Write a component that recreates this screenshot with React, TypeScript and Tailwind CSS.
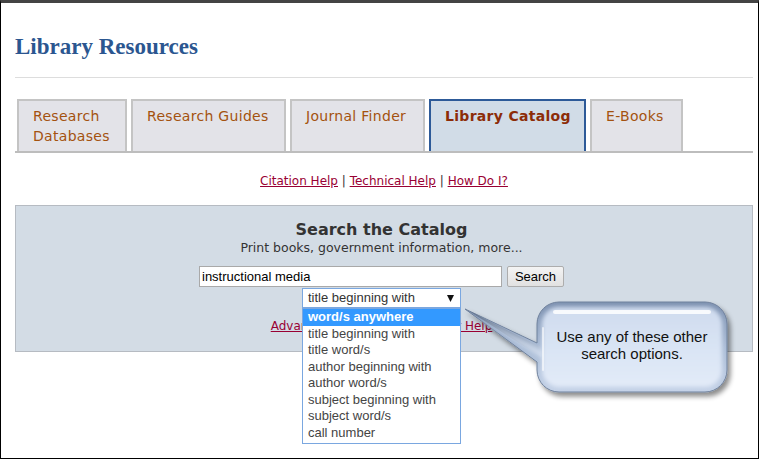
import React from 'react';

const sans = "font-['DejaVu_Sans',Verdana,sans-serif]";
const arial = "font-['Liberation_Sans',Arial,sans-serif]";

const options = [
  'word/s anywhere',
  'title beginning with',
  'title word/s',
  'author beginning with',
  'author word/s',
  'subject beginning with',
  'subject word/s',
  'call number',
];

function Callout() {
  return (
    <div className="absolute left-[454px] top-[292px] w-[290px] h-[110px]">
      <svg width="290" height="110" viewBox="0 0 290 110" className="absolute inset-0">
        <defs>
          <linearGradient id="rimFill" x1="0" y1="0" x2="0" y2="1">
            <stop offset="0" stopColor="#7d91b0" />
            <stop offset="0.5" stopColor="#a9bbd5" />
            <stop offset="1" stopColor="#c4d2e7" />
          </linearGradient>
          <linearGradient id="faceFill" x1="0" y1="0" x2="0" y2="1">
            <stop offset="0" stopColor="#cfdbee" />
            <stop offset="0.5" stopColor="#d9e4f4" />
            <stop offset="1" stopColor="#e3ebf8" />
          </linearGradient>
          <linearGradient id="tailFill" x1="0" y1="0" x2="1" y2="1">
            <stop offset="0" stopColor="#56657c" />
            <stop offset="1" stopColor="#b9c8de" />
          </linearGradient>
          <filter id="bubbleShadow" x="-10%" y="-10%" width="130%" height="140%">
            <feDropShadow dx="3" dy="4" stdDeviation="2.5" floodColor="#000" floodOpacity="0.45" />
          </filter>
          <filter id="soft" x="-10%" y="-10%" width="120%" height="120%">
            <feGaussianBlur stdDeviation="2" />
          </filter>
        </defs>
        <g filter="url(#bubbleShadow)">
          <path
            d="M104 7 H250 A22 22 0 0 1 272 29 V75 A22 22 0 0 1 250 97 H104 A22 22 0 0 1 82 75 V67 L10 14 L82 48 V29 A22 22 0 0 1 104 7 Z"
            fill="url(#rimFill)"
            stroke="#6f819c"
            strokeWidth="1"
          />
        </g>
        <path d="M14 16 L86 52 L86 62 Z" fill="url(#tailFill)" opacity="0.85" />
        <path d="M22 22 L88 56 L88 64 Z" fill="#d7e2f2" opacity="0.7" filter="url(#soft)" />
        <rect x="87" y="12" width="180" height="80" rx="17" fill="url(#faceFill)" filter="url(#soft)" />
        <rect x="98" y="15" width="158" height="4" rx="2" fill="#ffffff" opacity="0.85" />
        <rect x="87" y="32" width="2" height="44" rx="1" fill="#ffffff" opacity="0.6" />
      </svg>
      <div className={`absolute left-[82px] top-[33px] w-[190px] text-center text-[15px] leading-[17px] text-[#111] ${arial}`}>
        Use any of these other
        <br />
        search options.
      </div>
    </div>
  );
}

export default function App() {
  return (
    <div className="relative w-[759px] h-[459px] overflow-hidden bg-white border border-black border-t-[3px] border-t-[#444]">
      <div className="pl-[14px] pr-[5px] pt-[30px]">
        <h1 className="font-['Liberation_Serif','Times_New_Roman',serif] font-bold text-[23px] leading-[28px] text-[#2b5690]">
          Library Resources
        </h1>
        <div className="mt-[16px] h-px bg-[#dddddd]" />

        {/* Tabs */}
        <div className={`mt-[21px] flex items-stretch gap-1 pl-[2px] border-b-2 border-[#bdbdbd] ${sans} text-[14px] leading-[20px] tracking-[0.3px]`}>
          <div className="w-[110px] h-[52px] bg-[#e3e3e8] border-2 border-b-0 border-[#c4c4c4] pl-[14px] pt-[5px] text-[#a4520f]">
            Research Databases
          </div>
          <div className="w-[155px] h-[52px] bg-[#e3e3e8] border-2 border-b-0 border-[#c4c4c4] pl-[14px] pt-[5px] text-[#a4520f]">
            Research Guides
          </div>
          <div className="w-[135px] h-[52px] bg-[#e3e3e8] border-2 border-b-0 border-[#c4c4c4] pl-[14px] pt-[5px] text-[#a4520f]">
            Journal Finder
          </div>
          <div className="w-[157px] h-[52px] bg-[#d1dce7] border-2 border-b-0 border-[#2d5a98] pl-[14px] pt-[5px] font-bold text-[#8c2c08]">
            Library Catalog
          </div>
          <div className="w-[93px] h-[52px] bg-[#e3e3e8] border-2 border-b-0 border-[#c4c4c4] pl-[14px] pt-[5px] text-[#a4520f]">
            E-Books
          </div>
        </div>

        {/* Help links */}
        <div className={`mt-[20px] text-center text-[12px] leading-[16px] text-[#333] ${sans}`}>
          <a className="text-[#990033] underline">Citation Help</a> | <a className="text-[#990033] underline">Technical Help</a> |{' '}
          <a className="text-[#990033] underline">How Do I?</a>
        </div>

        {/* Search panel */}
        <div className="mt-[16px] h-[147px] bg-[#d3dce5] border border-[#b6bbc2] pt-[14px] pr-[5px] flex flex-col items-center">
          <h2 className={`text-[16px] leading-[20px] font-bold text-[#333] ${sans}`}>Search the Catalog</h2>
          <p className={`text-[12.5px] leading-[15px] text-[#333] ${sans}`}>Print books, government information, more...</p>
          <div className={`mt-[11px] flex gap-[5px] ${arial} text-[13px]`}>
            <div className="w-[303px] h-[21px] bg-white border border-[#a9a9a9] px-[2px] leading-[19px] text-black">
              instructional media
            </div>
            <div className="w-[57px] h-[21px] rounded-[2px] border border-[#adadad] bg-gradient-to-b from-[#f4f4f4] to-[#e1e1e1] text-center leading-[19px] text-black">
              Search
            </div>
          </div>
          <div className={`relative mt-px w-[159px] h-[20px] bg-white border border-[#7aa7e0] pl-[5px] pr-[6px] flex items-center justify-between ${arial} text-[13px] text-[#333]`}>
            <span>title beginning with</span>
            <svg width="7" height="7" viewBox="0 0 7 7">
              <path d="M0 0 H7 L3.5 7 Z" fill="#111" />
            </svg>
            <ul className="absolute left-[-1px] top-[19px] z-10 w-[159px] bg-white border border-[#7aa7e0] pb-[2px]">
              {options.map((o, i) => (
                <li
                  key={o}
                  className={`h-[16.5px] leading-[16.5px] pl-[5px] ${
                    i === 0 ? 'bg-[#3399ff] text-white font-bold' : 'text-[#444]'
                  }`}
                >
                  {o}
                </li>
              ))}
            </ul>
          </div>
          <div className={`mt-[10px] text-[12px] leading-[16px] text-[#333] ${sans}`}>
            <a className="text-[#990033] underline">Advanced Search</a> | <a className="text-[#990033] underline">Call Number Help</a>
          </div>
        </div>
      </div>
      <Callout />
    </div>
  );
}
